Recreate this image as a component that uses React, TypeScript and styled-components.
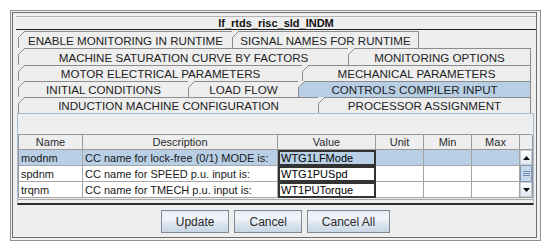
import React from 'react';
import styled, { createGlobalStyle } from 'styled-components';

const Global = createGlobalStyle`
  html, body { margin: 0; padding: 0; background: #ffffff; }
  body { font-family: "Liberation Sans", Arial, sans-serif; }
  * { box-sizing: border-box; }
`;

const Page = styled.div`
  width: 550px;
  height: 249px;
  padding: 10px 0 0 10px;
`;

const Frame = styled.div`
  width: 531px;
  height: 231px;
  border: 1px solid #8f8f8f;
  padding: 1px 3px 2px 1px;
  background: #f2f2f2;
`;

const Inner = styled.div`
  width: 100%;
  height: 100%;
  border: 1px solid #6c6c6c;
  padding: 3px 0 0 3px;
  background: #eeeeee;
  display: flex;
  flex-direction: column;
`;

const TitleBar = styled.div`
  height: 14px;
  border-top: 1px solid #b4b4b4;
  border-bottom: 1px solid #1e1e1e;
  background: #eeeeee;
  display: flex;
  align-items: center;
  justify-content: center;
  font-size: 11px;
  font-weight: bold;
  color: #111;
`;

const Tabs = styled.div`
  margin-top: 1px;
  padding: 0 5px 0 2px;
  display: flex;
  flex-direction: column;
`;

const TabRow = styled.div<{ $h: number }>`
  display: flex;
  height: ${p => p.$h}px;
`;

const Tab = styled.div<{ $w?: number; $sel?: boolean; $last?: boolean }>`
  position: relative;
  ${p => (p.$w ? `width: ${p.$w}px;` : 'flex: 1;')}
  flex-shrink: 0;
  border-top: 1px solid #8c8c8c;
  border-left: 1px solid #8c8c8c;
  border-right: ${p => (p.$last ? '1px solid #8c8c8c' : 'none')};
  background: ${p => (p.$sel ? '#b8cfe5' : '#eeeeee')};
  display: flex;
  align-items: center;
  justify-content: center;
  font-size: 11.6px;
  color: #222;
  white-space: nowrap;
  &::before {
    content: '';
    position: absolute;
    top: -1px;
    left: -1px;
    width: 7px;
    height: 7px;
    background: linear-gradient(
      to bottom right,
      #eeeeee 0,
      #eeeeee calc(50% - 0.6px),
      #8c8c8c calc(50% - 0.6px),
      #8c8c8c calc(50% + 0.6px),
      transparent calc(50% + 0.6px)
    );
  }
`;

const Panel = styled.div`
  margin: 0 2px 0 1px;
  height: 92px;
  border-top: 1px solid #a6bbd0;
  border-left: 1px solid #a6bbd0;
  border-right: 1px solid #a6bbd0;
  border-bottom: 2px solid #2c2c2c;
  padding-top: 20px;
  background: #eeeeee;
`;

const TableWrap = styled.div`
  height: 66px;
  border-bottom: 1px solid #a8a8a8;
`;

const Table = styled.div`
  display: grid;
  grid-template-columns: 64px 195px 98px 48px 48px 48px 13px;
  grid-template-rows: 15px 16px 16px 16px;
  border-left: 1px solid #9a9a9a;
  border-top: 1px solid #9a9a9a;
  width: 514px;
  font-size: 11px;
`;

const HeadCell = styled.div`
  background: #eeeeee;
  border-right: 1px solid #9a9a9a;
  border-bottom: 1px solid #9a9a9a;
  display: flex;
  align-items: center;
  justify-content: center;
  color: #2a2a2a;
  font-size: 11px;
`;

const Cell = styled.div<{ $sel?: boolean }>`
  background: ${p => (p.$sel ? '#b8cfe5' : '#ffffff')};
  border-right: 1px solid #a6a6a6;
  border-bottom: 1px solid #a6a6a6;
  display: flex;
  align-items: center;
  padding-left: 2px;
  color: #1a1a1a;
  white-space: nowrap;
  overflow: hidden;
`;

const ValueCell = styled.div<{ $sel?: boolean }>`
  background: ${p => (p.$sel ? '#b8cfe5' : '#ffffff')};
  border: 2px solid #333333;
  display: flex;
  align-items: center;
  padding-left: 1px;
  color: #000;
  font-weight: normal;
  white-space: nowrap;
`;

const ScrollBar = styled.div`
  grid-column: 7;
  grid-row: 2 / span 3;
  display: flex;
  flex-direction: column;
  background: #eeeeee;
  border-right: 1px solid #9a9a9a;
  border-bottom: 1px solid #9a9a9a;
`;

const ArrowBtn = styled.div`
  height: 15px;
  display: flex;
  align-items: center;
  justify-content: center;
  background: linear-gradient(to bottom, #ffffff, #e2e8ef);
  border: 1px solid #c2cbd6;
`;

const Thumb = styled.div`
  flex: 1;
  background: #c9d9ea;
  border: 1px solid #7d97b5;
  display: flex;
  flex-direction: column;
  align-items: center;
  justify-content: center;
  gap: 1px;
`;

const Grip = styled.div`
  width: 7px;
  height: 1px;
  background: #6f8db0;
`;

const ButtonBar = styled.div`
  flex: 1;
  display: flex;
  justify-content: center;
  align-items: flex-start;
  padding-top: 5px;
  padding-right: 1px;
  gap: 5px;
`;

const Button = styled.button`
  height: 23px;
  padding: 0 14px;
  border: 1px solid #7a8a99;
  background: linear-gradient(to bottom, #e6edf5 0%, #f2f6fa 35%, #dae4ee 65%, #c8d6e4 100%);
  font-family: "Liberation Sans", Arial, sans-serif;
  font-size: 12px;
  color: #2a2a2a;
  cursor: pointer;
`;

const Up = () => (
  <svg width="7" height="4" viewBox="0 0 7 4"><polygon points="0,4 7,4 3.5,0" fill="#111" /></svg>
);
const Down = () => (
  <svg width="7" height="4" viewBox="0 0 7 4"><polygon points="0,0 7,0 3.5,4" fill="#111" /></svg>
);

const rows = [
  { name: 'modnm', desc: 'CC name for lock-free (0/1) MODE is:', value: 'WTG1LFMode', sel: true },
  { name: 'spdnm', desc: 'CC name for SPEED p.u. input is:', value: 'WTG1PUSpd' },
  { name: 'trqnm', desc: 'CC name for TMECH p.u. input is:', value: 'WT1PUTorque' },
];

export default function App() {
  return (
    <Page>
      <Global />
      <Frame>
        <Inner>
          <TitleBar>lf_rtds_risc_sld_INDM</TitleBar>
          <Tabs>
            <TabRow $h={17}>
              <Tab $w={214}>ENABLE MONITORING IN RUNTIME</Tab>
              <Tab $w={187} $last>SIGNAL NAMES FOR RUNTIME</Tab>
            </TabRow>
            <TabRow $h={17}>
              <Tab $w={330}>MACHINE SATURATION CURVE BY FACTORS</Tab>
              <Tab $last>MONITORING OPTIONS</Tab>
            </TabRow>
            <TabRow $h={16}>
              <Tab $w={284}>MOTOR ELECTRICAL PARAMETERS</Tab>
              <Tab $last>MECHANICAL PARAMETERS</Tab>
            </TabRow>
            <TabRow $h={16}>
              <Tab $w={170}>INITIAL CONDITIONS</Tab>
              <Tab $w={110}>LOAD FLOW</Tab>
              <Tab $sel $last>CONTROLS COMPILER INPUT</Tab>
            </TabRow>
            <TabRow $h={16}>
              <Tab $w={300}>INDUCTION MACHINE CONFIGURATION</Tab>
              <Tab $last>PROCESSOR ASSIGNMENT</Tab>
            </TabRow>
          </Tabs>
          <Panel>
            <TableWrap>
              <Table>
                <HeadCell>Name</HeadCell>
                <HeadCell>Description</HeadCell>
                <HeadCell>Value</HeadCell>
                <HeadCell>Unit</HeadCell>
                <HeadCell>Min</HeadCell>
                <HeadCell>Max</HeadCell>
                <HeadCell />
                {rows.map(r => (
                  <React.Fragment key={r.name}>
                    <Cell $sel={r.sel}>{r.name}</Cell>
                    <Cell $sel={r.sel}>{r.desc}</Cell>
                    <ValueCell $sel={r.sel}>{r.value}</ValueCell>
                    <Cell $sel={r.sel} />
                    <Cell $sel={r.sel} />
                    <Cell $sel={r.sel} />
                  </React.Fragment>
                ))}
                <ScrollBar>
                  <ArrowBtn><Up /></ArrowBtn>
                  <Thumb><Grip /><Grip /><Grip /></Thumb>
                  <ArrowBtn><Down /></ArrowBtn>
                </ScrollBar>
              </Table>
            </TableWrap>
          </Panel>
          <ButtonBar>
            <Button>Update</Button>
            <Button>Cancel</Button>
            <Button>Cancel All</Button>
          </ButtonBar>
        </Inner>
      </Frame>
    </Page>
  );
}
